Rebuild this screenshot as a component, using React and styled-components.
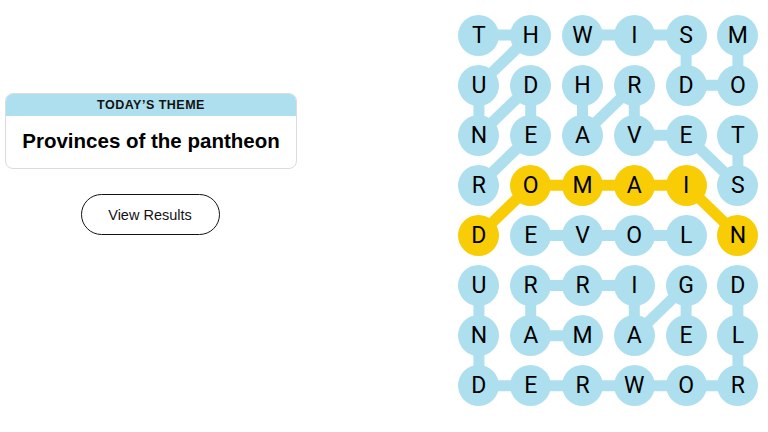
import styled, { createGlobalStyle } from 'styled-components';

const GlobalStyle = createGlobalStyle`
  body {
    margin: 0;
    background: #fff;
    font-family: "Liberation Sans", Arial, sans-serif;
    color: #000;
  }
`;

const COL = 51.8;
const ROW = 50.1;
const DOT = 41;

const letters = [
  'THWISM',
  'UDHRDO',
  'NEAVET',
  'ROMAIS',
  'DEVOLN',
  'URRIGD',
  'NAMAEL',
  'DERWOR',
];

// [r1, c1, r2, c2]
const blueLinks = [
  [0, 0, 0, 1], [0, 2, 0, 3], [0, 3, 0, 4], [0, 4, 1, 4], [0, 5, 1, 5],
  [1, 4, 1, 5], [0, 1, 1, 0], [1, 0, 2, 0], [1, 1, 2, 0], [1, 1, 2, 1],
  [1, 2, 2, 2], [1, 3, 2, 2], [1, 3, 2, 3], [2, 3, 2, 4], [2, 4, 3, 5],
  [2, 5, 3, 5], [2, 1, 3, 0],
  [4, 1, 4, 2], [4, 2, 4, 3], [4, 3, 4, 4],
  [5, 1, 5, 2], [5, 2, 5, 3], [5, 3, 6, 3], [5, 4, 6, 3], [5, 4, 6, 4],
  [5, 5, 6, 5], [6, 5, 7, 5], [5, 0, 6, 0], [6, 0, 7, 0], [5, 1, 6, 1],
  [6, 1, 6, 2],
  [7, 0, 7, 1], [7, 1, 7, 2], [7, 2, 7, 3], [7, 3, 7, 4], [7, 4, 7, 5],
];

const goldLinks = [
  [3, 1, 3, 2], [3, 2, 3, 3], [3, 3, 3, 4], [3, 1, 4, 0], [3, 4, 4, 5],
];

const goldCells = ['3-1', '3-2', '3-3', '3-4', '4-0', '4-5'];

const Page = styled.div`
  display: flex;
  align-items: flex-start;
  width: 768px;
  height: 432px;
  overflow: hidden;
`;

const Side = styled.div`
  width: 292px;
  margin: 93px 0 0 5px;
  display: flex;
  flex-direction: column;
  align-items: center;
  gap: 25px;
`;

const ThemeCard = styled.div`
  width: 100%;
  box-sizing: border-box;
  border: 1px solid #dcdcdc;
  border-radius: 8px;
  overflow: hidden;
`;

const ThemeLabel = styled.div`
  background: #aedfee;
  height: 22px;
  line-height: 22px;
  text-align: center;
  font-size: 12.5px;
  font-weight: 700;
  letter-spacing: 0.5px;
  color: #121212;
`;

const ThemeTitle = styled.div`
  height: 52px;
  line-height: 50px;
  text-align: center;
  font-size: 20.5px;
  font-weight: 700;
  color: #000;
`;

const ResultsButton = styled.button`
  width: 139px;
  height: 41px;
  border: 1px solid #121212;
  border-radius: 21px;
  background: #fff;
  font-family: "Liberation Sans", Arial, sans-serif;
  font-size: 14.5px;
  color: #121212;
  margin-left: -2px;
  cursor: pointer;
`;

const Board = styled.div`
  position: relative;
  margin: 10px 0 0 156px;
  width: ${COL * 6}px;
  height: ${ROW * 8}px;
`;

const Links = styled.svg`
  position: absolute;
  inset: 0;
`;

const Cells = styled.div`
  position: relative;
  display: grid;
  grid-template-columns: repeat(6, ${COL}px);
  grid-template-rows: repeat(8, ${ROW}px);
  place-items: center;
`;

const Letter = styled.div`
  width: ${DOT}px;
  height: ${DOT}px;
  border-radius: 50%;
  background: ${p => (p.$found ? '#f8cd05' : '#aedfee')};
  display: flex;
  align-items: center;
  justify-content: center;
  font-family: Roboto, "Liberation Sans", sans-serif;
  font-size: 23px;
  color: #000;
`;

const cx = c => COL * c + COL / 2;
const cy = r => ROW * r + ROW / 2;

const Line = ({ link, color }) => {
  const [r1, c1, r2, c2] = link;
  return (
    <line
      x1={cx(c1)}
      y1={cy(r1)}
      x2={cx(c2)}
      y2={cy(r2)}
      stroke={color}
      strokeWidth="11"
    />
  );
};

const App = () => (
  <Page>
    <GlobalStyle />
    <Side>
      <ThemeCard>
        <ThemeLabel>TODAY’S THEME</ThemeLabel>
        <ThemeTitle>Provinces of the pantheon</ThemeTitle>
      </ThemeCard>
      <ResultsButton>View Results</ResultsButton>
    </Side>
    <Board>
      <Links width={COL * 6} height={ROW * 8}>
        {blueLinks.map((l, i) => (
          <Line key={'b' + i} link={l} color="#aedfee" />
        ))}
        {goldLinks.map((l, i) => (
          <Line key={'g' + i} link={l} color="#f8cd05" />
        ))}
      </Links>
      <Cells>
        {letters.map((row, r) =>
          row.split('').map((ch, c) => (
            <Letter key={r + '-' + c} $found={goldCells.includes(r + '-' + c)}>
              {ch}
            </Letter>
          ))
        )}
      </Cells>
    </Board>
  </Page>
);

export default App;
